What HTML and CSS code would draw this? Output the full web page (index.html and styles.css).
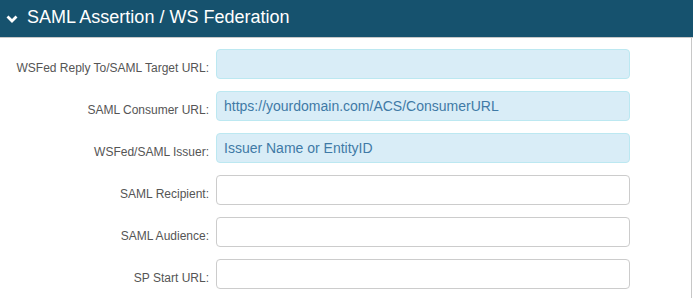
FILE: index.html
```html
<!DOCTYPE html>
<html lang="en">
<head>
    <meta charset="UTF-8">
    <title>SAML Assertion / WS Federation</title>
    <link rel="stylesheet" href="styles.css">
</head>
<body>

    <div class="panel">
        <div class="panel-heading">
            <svg class="chevron" width="12" height="8" viewBox="0 0 12 8">
                <path d="M1.5 1.5 L6 6 L10.5 1.5" fill="none" stroke="#fff" stroke-width="2.8"/>
            </svg>
            <span>SAML Assertion / WS Federation</span>
        </div>

        <div class="panel-body">
            <label>WSFed Reply To/SAML Target URL:</label>
            <input type="text" class="field info">

            <label>SAML Consumer URL:</label>
            <input type="text" class="field info" placeholder="https://yourdomain.com/ACS/ConsumerURL">

            <label>WSFed/SAML Issuer:</label>
            <input type="text" class="field info" placeholder="Issuer Name or EntityID">

            <label>SAML Recipient:</label>
            <input type="text" class="field">

            <label>SAML Audience:</label>
            <input type="text" class="field">

            <label>SP Start URL:</label>
            <input type="text" class="field">
        </div>
    </div>

</body>
</html>
```

FILE: styles.css
```css
body {
    font-family: "Liberation Sans", Arial, sans-serif;
    background-color: #fff;
    margin: 0;
}
.panel {
    width: 693px;
}
.panel-heading {
    background-color: #16526e;
    border-bottom: 1px solid #c8c8c8;
    color: #fff;
    display: flex;
    align-items: center;
    padding-left: 6px;
    box-sizing: border-box;
    height: 38px;
    font-size: 18px;
}
.chevron {
    margin-right: 9px;
    margin-top: 1px;
}
.panel-heading span {
    margin-top: -2px;
}
.panel-body {
    width: 692px;
    box-sizing: border-box;
    border-right: 1px solid #c8c8c8;
    padding-top: 11px;
    padding-bottom: 9px;
    display: grid;
    grid-template-columns: 209px 414px;
    column-gap: 7px;
    row-gap: 12px;
}
label {
    text-align: right;
    font-size: 12px;
    line-height: 14px;
    padding-top: 12px;
    color: #555;
}
.field {
    height: 30px;
    box-sizing: border-box;
    margin: 0;
    padding: 0 7px;
    font-family: "Liberation Sans", Arial, sans-serif;
    font-size: 14px;
    border: 1px solid #ccc;
    border-radius: 4px;
    background: #fff;
}
.field.info {
    background: #d9edf7;
    border-color: #bce8f1;
}
.field::placeholder {
    color: #3f7aa6;
    opacity: 1;
}
```
